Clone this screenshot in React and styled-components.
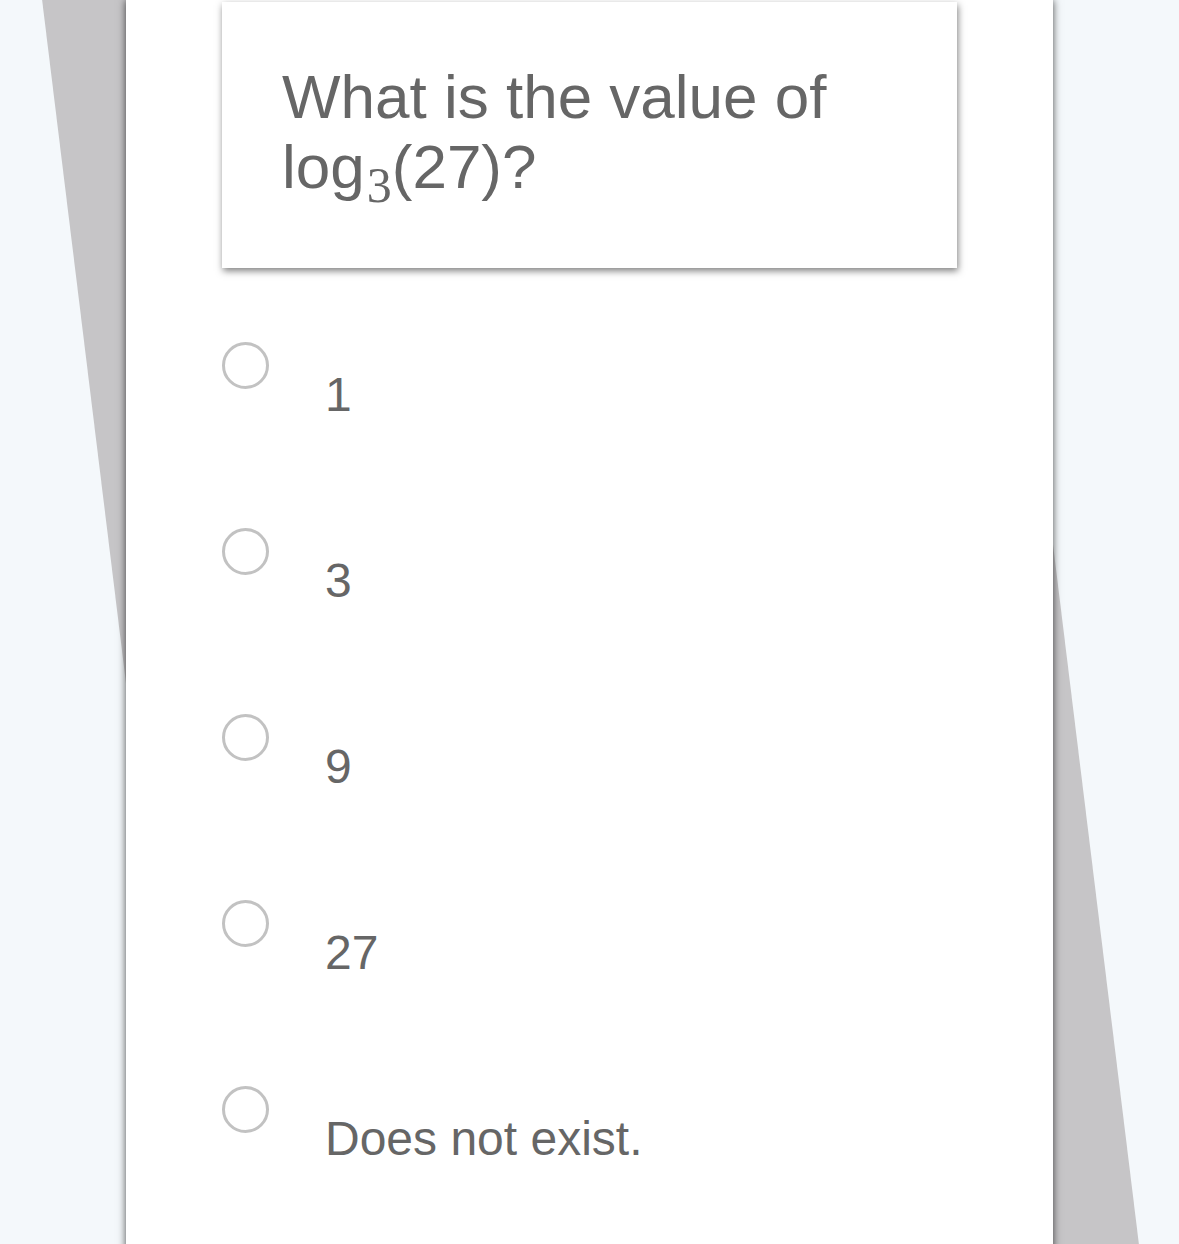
import React from 'react';
import styled, { createGlobalStyle } from 'styled-components';

const GlobalStyle = createGlobalStyle`
  html, body {
    margin: 0;
    padding: 0;
    overflow: hidden;
    background: #f4f8fb;
  }
`;

const Page = styled.div`
  position: relative;
  width: 100%;
  height: 1244px;
  overflow: hidden;
  display: flex;
  justify-content: center;
  font-family: 'Liberation Sans', Arial, sans-serif;
  color: #666666;
`;

// tilted sheet peeking out from behind the main card
const BackSheet = styled.div`
  position: absolute;
  top: -600px;
  left: 50%;
  width: 937px;
  height: 2444px;
  margin-left: -468px;
  background: #c6c5c7;
  transform: rotate(-7deg);
`;

const Card = styled.main`
  position: relative;
  z-index: 1;
  width: 927px;
  min-height: 1300px;
  box-sizing: border-box;
  padding: 2px 96px 0;
  background: #ffffff;
  box-shadow: 0 0 8px rgba(0, 0, 0, 0.7);
`;

const QuestionBox = styled.section`
  height: 266px;
  box-sizing: border-box;
  padding: 60px 60px 0;
  background: #ffffff;
  box-shadow: 1px 3px 7px rgba(0, 0, 0, 0.5);
`;

const QuestionText = styled.h1`
  margin: 0;
  font-size: 62px;
  font-weight: 400;
  line-height: 70px;
`;

const Sub = styled.sub`
  position: relative;
  top: 14px;
  margin: 0 0 0 2px;
  vertical-align: baseline;
  line-height: 0;
  font-family: 'Liberation Serif', 'Times New Roman', serif;
  font-size: 50px;
`;

const Options = styled.ul`
  list-style: none;
  margin: 74px 0 0;
  padding: 0;
  display: flex;
  flex-direction: column;
  gap: 106px;
`;

const Option = styled.li`
  display: flex;
  align-items: flex-start;
  height: 80px;
`;

const Radio = styled.input`
  appearance: none;
  -webkit-appearance: none;
  flex: none;
  width: 47px;
  height: 47px;
  margin: 0;
  box-sizing: border-box;
  border: 3px solid #c2c2c2;
  border-radius: 50%;
  background: #ffffff;
`;

const OptionLabel = styled.label`
  margin: 25px 0 0 56px;
  font-size: 48px;
  line-height: 55px;
`;

const choices = ['1', '3', '9', '27', 'Does not exist.'];

export default function App() {
  return (
    <>
      <GlobalStyle />
      <Page>
        <BackSheet />
        <Card>
          <QuestionBox>
            <QuestionText>
              What is the value of log<Sub>3</Sub>(27)?
            </QuestionText>
          </QuestionBox>
          <Options>
            {choices.map((c, i) => (
              <Option key={c}>
                <Radio type="radio" name="answer" id={`opt-${i}`} />
                <OptionLabel htmlFor={`opt-${i}`}>{c}</OptionLabel>
              </Option>
            ))}
          </Options>
        </Card>
      </Page>
    </>
  );
}
